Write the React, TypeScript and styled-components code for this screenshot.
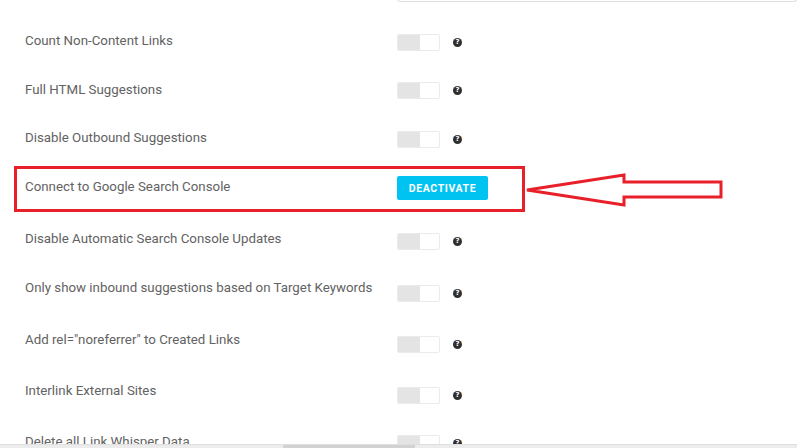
import React from "react";
import styled, { createGlobalStyle } from "styled-components";

const GlobalStyle = createGlobalStyle`
  html, body {
    margin: 0;
    padding: 0;
    background: #fff;
  }
  body {
    font-family: Roboto, "Liberation Sans", sans-serif;
  }
`;

const Page = styled.div`
  position: relative;
  width: 797px;
  height: 448px;
  overflow: hidden;
  background: #fff;
`;

const TopInput = styled.div`
  margin-left: 397px;
  margin-top: -30px;
  height: 31px;
  border: 1px solid #dedede;
  border-top: none;
  border-radius: 0 0 3px 3px;
`;

const List = styled.div`
  display: flex;
  flex-direction: column;
  padding-top: 29px;
`;

const Row = styled.div<{ $h: number }>`
  display: flex;
  align-items: flex-start;
  height: ${(p) => p.$h}px;
  padding-left: 25px;
`;

const Label = styled.div`
  width: 372px;
  font-size: 13.3px;
  line-height: 20px;
  color: #626262;
  white-space: nowrap;
`;

const Control = styled.div<{ $offset: number }>`
  display: flex;
  align-items: center;
  margin-top: ${(p) => p.$offset}px;
`;

const Toggle = styled.div`
  display: flex;
  width: 43px;
  height: 17px;
  box-sizing: border-box;
  border: 1px solid #ebebeb;
  border-radius: 2px;
  overflow: hidden;
  background: #fff;
`;

const Knob = styled.div`
  width: 22px;
  background: #e4e4e4;
`;

const Help = styled.div`
  width: 9px;
  height: 9px;
  margin-left: 13px;
  border-radius: 50%;
  background: #2f2f2f;
  color: #fff;
  font-size: 7px;
  font-weight: 700;
  line-height: 9px;
  text-align: center;
  font-family: "DejaVu Sans", sans-serif;
`;

const Button = styled.div`
  width: 91px;
  height: 24px;
  display: flex;
  align-items: center;
  justify-content: center;
  background: #00c3f2;
  border-radius: 2px;
  color: #fff;
  font-size: 10.5px;
  font-weight: 700;
  letter-spacing: 0.6px;
`;

const Highlight = styled.div`
  position: absolute;
  left: 14px;
  top: 166px;
  width: 511px;
  height: 46px;
  box-sizing: border-box;
  border: 3px solid #e8202a;
`;

const Arrow = styled.svg`
  position: absolute;
  left: 524px;
  top: 170px;
`;

const Scrollbar = styled.div`
  position: absolute;
  left: 0;
  right: 0;
  bottom: 0;
  height: 3px;
  background: #ececec;
  border-top: 1px solid #e0e0e0;
`;

const Thumb = styled.div`
  margin-left: 283px;
  width: 132px;
  height: 3px;
  background: #d2d2d2;
`;

type Item = { label: string; h: number; offset: number; button?: boolean };

const items: Item[] = [
  { label: "Count Non-Content Links", h: 49, offset: 3 },
  { label: "Full HTML Suggestions", h: 48, offset: 2 },
  { label: "Disable Outbound Suggestions", h: 49, offset: 3 },
  { label: "Connect to Google Search Console", h: 52, offset: -1, button: true },
  { label: "Disable Automatic Search Console Updates", h: 49, offset: 4 },
  { label: "Only show inbound suggestions based on Target Keywords", h: 52, offset: 7 },
  { label: "Add rel=\"noreferrer\" to Created Links", h: 51, offset: 6 },
  { label: "Interlink External Sites", h: 51, offset: 6 },
  { label: "Delete all Link Whisper Data", h: 51, offset: 3 },
];

const App: React.FC = () => {
  return (
    <Page>
      <GlobalStyle />
      <TopInput />
      <List>
        {items.map((item) => (
          <Row key={item.label} $h={item.h}>
            <Label>{item.label}</Label>
            <Control $offset={item.offset}>
              {item.button ? (
                <Button>DEACTIVATE</Button>
              ) : (
                <>
                  <Toggle>
                    <Knob />
                  </Toggle>
                  <Help>?</Help>
                </>
              )}
            </Control>
          </Row>
        ))}
      </List>
      <Highlight />
      <Arrow width="202" height="40" viewBox="0 0 202 40">
        <path
          d="M3 20 L100 5 L100 12 L197 12 L197 27 L100 27 L100 35 Z"
          fill="#fff"
          stroke="#e8202a"
          strokeWidth="3"
          strokeLinejoin="miter"
        />
      </Arrow>
      <Scrollbar>
        <Thumb />
      </Scrollbar>
    </Page>
  );
};

export default App;
